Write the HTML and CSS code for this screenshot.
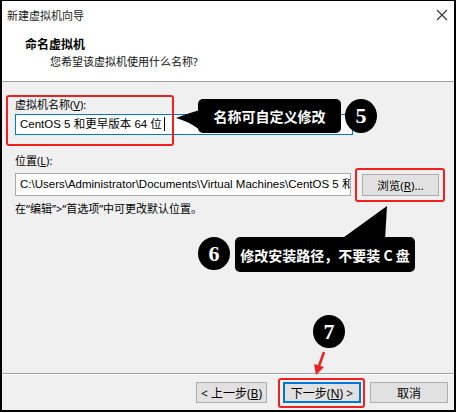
FILE: index.html
```html
<!DOCTYPE html>
<html lang="zh-CN">
<head>
  <meta charset="UTF-8">
  <meta name="viewport" content="width=device-width, initial-scale=1.0">
  <title>新建虚拟机向导</title>
  <link rel="stylesheet" href="styles.css">
</head>
<body>
  <div class="window">
    <div class="titlebar">
      <span>新建虚拟机向导</span>
      <svg class="close" width="12" height="12" viewBox="0 0 12 12"><path d="M1 1 L11 11 M11 1 L1 11" stroke="#333" stroke-width="1.1" fill="none"/></svg>
    </div>
    <div class="header">
      <h1>命名虚拟机</h1>
      <p>您希望该虚拟机使用什么名称?</p>
    </div>
    <div class="content">
      <label class="lbl">虚拟机名称(<u>V</u>):</label>
      <div class="field name">CentOS 5 和更早版本 64 位<span class="caret"></span></div>
      <label class="lbl loc">位置(<u>L</u>):</label>
      <div class="row">
        <div class="field path">C:\Users\Administrator\Documents\Virtual Machines\CentOS 5 和更早版本 64 位</div>
        <button class="btn browse">浏览(<u>R</u>)...</button>
      </div>
      <p class="hint">在“编辑”&gt;“首选项”中可更改默认位置。</p>
    </div>
    <div class="footer">
      <button class="btn prev">&lt; 上一步(<u>B</u>)</button>
      <button class="btn next">下一步(<u>N</u>) &gt;</button>
      <button class="btn cancel">取消</button>
    </div>
  </div>

  <!-- annotations drawn over the dialog -->
  <div class="mark mark-name"></div>
  <div class="mark mark-browse"></div>
  <div class="mark mark-next"></div>

  <svg class="tails" width="457" height="413" viewBox="0 0 457 413">
    <path d="M200 110 Q186 114 176 118 Q188 121 200 130 Z" fill="#000"/>
    <polygon points="387,206 340,240 385,240" fill="#000"/>
    <path d="M324 352 L319 366" stroke="#f02020" stroke-width="2.5" fill="none"/>
    <polygon points="314,364 324,367 316,375" fill="#f02020"/>
  </svg>

  <div class="bubble bubble-5">名称可自定义修改</div>
  <div class="num num-5">5</div>
  <div class="num num-6">6</div>
  <div class="bubble bubble-6">修改安装路径，不要装 C 盘</div>
  <div class="num num-7">7</div>
</body>
</html>
```

FILE: styles.css
```css
* { box-sizing: border-box; margin: 0; padding: 0; }
body { position: relative; width: 457px; height: 413px; background: #fff; font-family: "Segoe UI", "Noto Sans", "Noto Sans CJK SC", sans-serif; font-size: 11px; color: #000; overflow: hidden; }
u { text-decoration: underline; text-underline-offset: 1px; }

.window { width: 456px; height: 412px; border: 2px solid #000; border-top-width: 1px; display: flex; flex-direction: column; background: #f0f0f0; }
.titlebar { height: 27px; background: #fff; display: flex; align-items: center; justify-content: space-between; padding: 0 6px 0 5px; font-size: 11px; color: #222; }
.header { height: 54px; background: #fff; border-bottom: 1px solid #a0a0a0; padding: 9px 0 0 23px; }
.header h1 { font-size: 12px; font-weight: bold; line-height: 15px; }
.header p { font-size: 11px; line-height: 16px; margin: 2px 0 0 25px; color: #111; }

.content { flex: 1; padding: 16px 0 0 13px; }
.lbl { display: block; line-height: 14px; }
.lbl.loc { margin-top: 19px; }
.field { height: 21px; background: #fff; border: 1px solid #7a7a7a; padding: 0 4px; line-height: 19px; font-family: "Liberation Sans", "Noto Sans CJK SC", sans-serif; font-size: 11.5px; white-space: nowrap; overflow: hidden; }
.field.name { width: 338px; margin-top: 2px; border-color: #0078d7; }
.caret { display: inline-block; width: 1px; height: 14px; background: #000; vertical-align: -3px; margin-left: 2px; }
.row { display: flex; gap: 11px; margin-top: 5px; }
.field.path { width: 336px; height: 23px; line-height: 21px; border-color: #a9a9a9; }
.btn { height: 21px; background: #e1e1e1; border: 1px solid #adadad; font: inherit; font-size: 11.5px; color: #000; white-space: nowrap; }
.browse { width: 77px; height: 22px; margin-top: 1px; }
.hint { margin-top: 6px; line-height: 14px; }

.footer { height: 37px; border-top: 1px solid #a0a0a0; box-shadow: inset 0 1px 0 #fff; display: flex; padding: 8px 0 0 194px; }
.footer .btn { font-size: 12px; }
.prev { width: 71px; }
.next { width: 78px; margin-left: 16px; border: 2px solid #0078d7; }
.cancel { width: 78px; margin-left: 9px; }

.mark { position: absolute; border: 2px solid #f02020; border-radius: 3px; }
.mark-name { left: 6px; top: 95px; width: 168px; height: 51px; }
.mark-browse { left: 355px; top: 168px; width: 90px; height: 34px; }
.mark-next { left: 278px; top: 378px; width: 87px; height: 30px; }

.tails { position: absolute; left: 0; top: 0; }
.bubble { position: absolute; background: #000; color: #fff; border-radius: 5px; font-family: "Noto Sans CJK SC", sans-serif; font-weight: bold; font-size: 14px; display: flex; align-items: center; justify-content: center; }
.bubble-5 { left: 198px; top: 99px; width: 143px; height: 34px; }
.bubble-6 { left: 235px; top: 237px; width: 180px; height: 35px; }
.num { position: absolute; width: 32px; height: 34px; border-radius: 50%; background: #000; color: #fff; font-family: "Liberation Serif", serif; font-weight: bold; font-size: 22px; display: flex; align-items: center; justify-content: center; }
.num-5 { left: 345px; top: 99px; }
.num-6 { left: 198px; top: 237px; height: 33px; }
.num-7 { left: 313px; top: 315px; height: 33px; }
```
